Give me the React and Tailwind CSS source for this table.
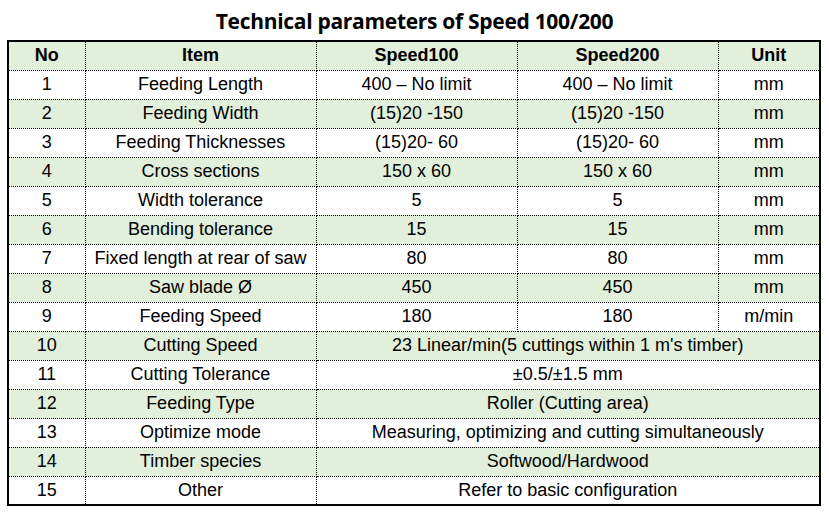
const rows = [
  ["1", "Feeding Length", "400 – No limit", "400 – No limit", "mm"],
  ["2", "Feeding Width", "(15)20 -150", "(15)20 -150", "mm"],
  ["3", "Feeding Thicknesses", "(15)20- 60", "(15)20- 60", "mm"],
  ["4", "Cross sections", "150 x 60", "150 x 60", "mm"],
  ["5", "Width tolerance", "5", "5", "mm"],
  ["6", "Bending tolerance", "15", "15", "mm"],
  ["7", "Fixed length at rear of saw", "80", "80", "mm"],
  ["8", "Saw blade Ø", "450", "450", "mm"],
  ["9", "Feeding Speed", "180", "180", "m/min"],
  ["10", "Cutting Speed", "23 Linear/min(5 cuttings within 1 m's timber)"],
  ["11", "Cutting Tolerance", "±0.5/±1.5 mm"],
  ["12", "Feeding Type", "Roller (Cutting area)"],
  ["13", "Optimize mode", "Measuring, optimizing and cutting simultaneously"],
  ["14", "Timber species", "Softwood/Hardwood"],
  ["15", "Other", "Refer to basic configuration"],
];

const cell = "border border-dotted border-black text-center p-0";

export default function App() {
  return (
    <div className="w-[829px] h-[515px] bg-white">
      <h1 className="h-[40px] pt-[7px] text-center text-[21px] leading-[28px] font-bold text-black font-['Open_Sans',sans-serif] tracking-[-0.3px]">
        Technical parameters of Speed 100/200
      </h1>
      <div className="pl-[7px]">
        <table className="w-[812px] border-collapse border-2 border-black font-['Liberation_Sans',Arial,sans-serif] text-[18px] text-black table-fixed">
          <colgroup>
            <col className="w-[77px]" />
            <col className="w-[231px]" />
            <col className="w-[201px]" />
            <col className="w-[201px]" />
            <col className="w-[102px]" />
          </colgroup>
          <thead>
            <tr className="h-[29px] bg-[#e2efda] font-bold">
              <th className={cell}>No</th>
              <th className={cell}>Item</th>
              <th className={cell}>Speed100</th>
              <th className={cell}>Speed200</th>
              <th className={cell}>Unit</th>
            </tr>
          </thead>
          <tbody>
            {rows.map((r, i) => (
              <tr key={r[0]} className={`h-[29px] ${i % 2 === 1 ? "bg-[#e2efda]" : "bg-white"}`}>
                <td className={cell}>{r[0]}</td>
                <td className={cell}>{r[1]}</td>
                {r.length === 5 ? (
                  <>
                    <td className={cell}>{r[2]}</td>
                    <td className={cell}>{r[3]}</td>
                    <td className={cell}>{r[4]}</td>
                  </>
                ) : (
                  <td className={cell} colSpan={3}>{r[2]}</td>
                )}
              </tr>
            ))}
          </tbody>
        </table>
      </div>
    </div>
  );
}
